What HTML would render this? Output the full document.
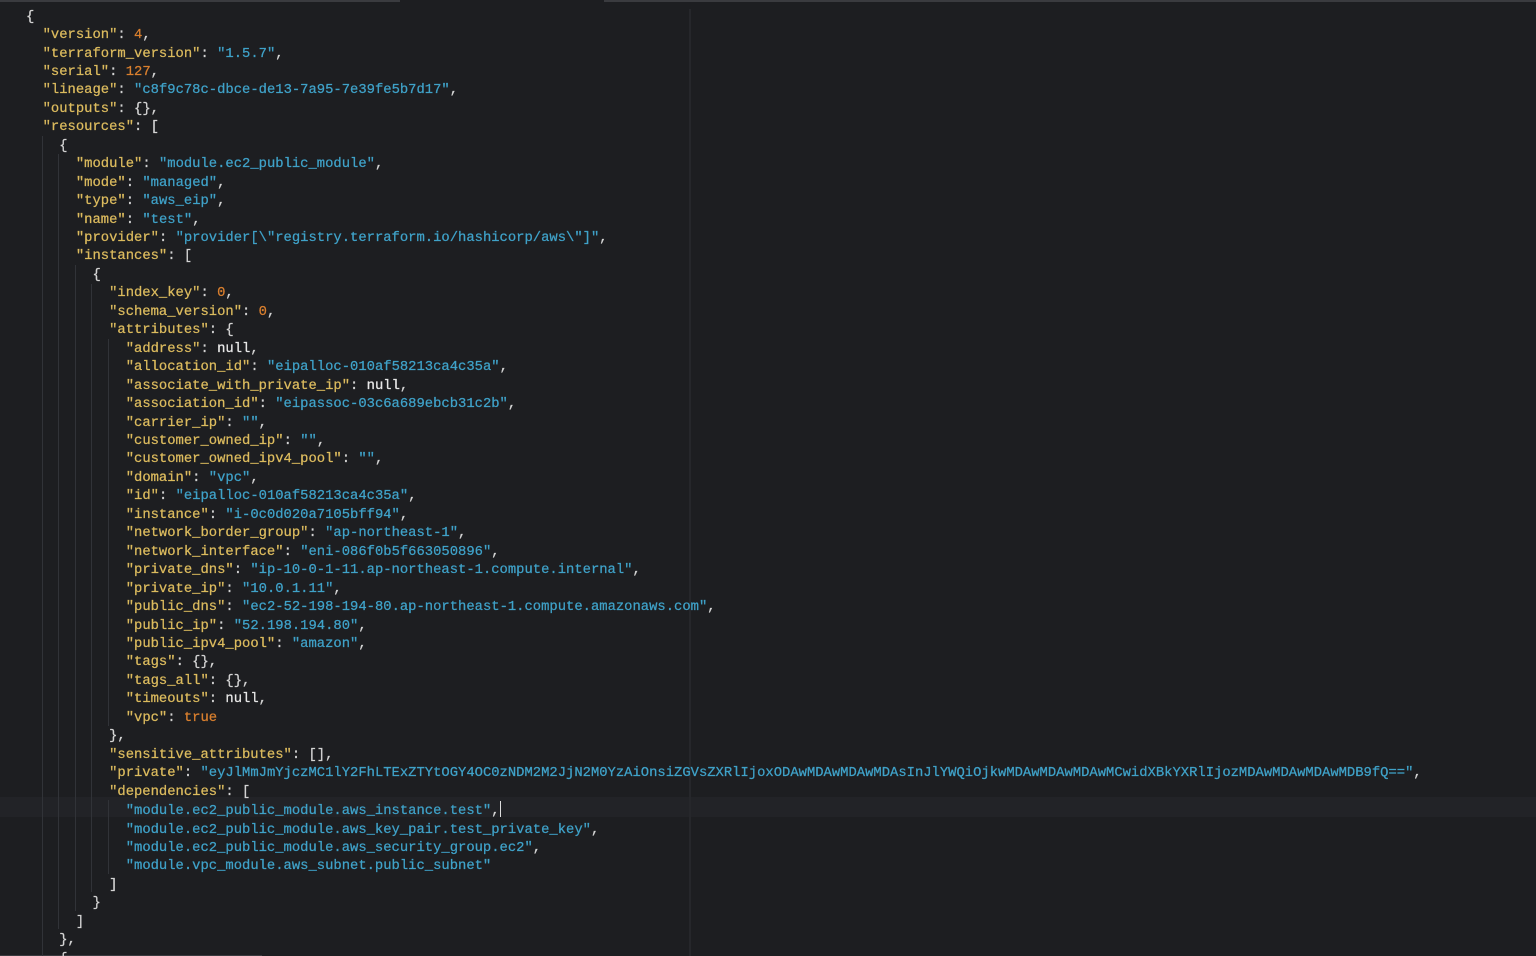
<!DOCTYPE html>
<html><head><meta charset="utf-8"><style>
html,body{margin:0;padding:0;background:#1d1e21;width:1536px;height:956px;overflow:hidden;position:relative}
pre{position:absolute;left:26px;top:7.6px;margin:0;font-family:"Liberation Mono",monospace;font-size:13.85px;line-height:18.45px;color:#d4d4d4;white-space:pre;letter-spacing:0;-webkit-text-stroke:0.25px currentColor}
.k{color:#dcbb5e}.s{color:#3fa2c9}.n{color:#d97f2e}.w{color:#e8e8e8}
.g{position:absolute;width:1px;background:#313338}
.hl{position:absolute;left:0;width:1536px;top:797px;height:20px;background:#222327}
.cur{display:inline-block;width:1.5px;height:16px;background:#ddd;vertical-align:-3px}
</style></head><body>
<div style="position:absolute;left:0;top:0;width:400px;height:2px;background:#3a3b3f"></div>
<div style="position:absolute;left:604px;top:0;width:932px;height:2px;background:#3a3b3f"></div>
<div class="hl"></div>
<div style="position:absolute;left:689px;top:9px;width:2px;height:947px;background:#26272b"></div>
<div style="position:absolute;left:0;top:955px;width:262px;height:1px;background:#3a3b3f"></div>
<div class="g" style="left:42px;top:136px;height:820px"></div>
<div class="g" style="left:58px;top:154.4px;height:774.9px"></div>
<div class="g" style="left:75px;top:265.1px;height:645.8px"></div>
<div class="g" style="left:91px;top:283.6px;height:608.9px"></div>
<div class="g" style="left:108px;top:338.9px;height:387.5px"></div>
<div class="g" style="left:108px;top:800.1px;height:73.8px"></div>
<pre>{
  <span class="k">"version"</span>: <span class="n">4</span>,
  <span class="k">"terraform_version"</span>: <span class="s">"1.5.7"</span>,
  <span class="k">"serial"</span>: <span class="n">127</span>,
  <span class="k">"lineage"</span>: <span class="s">"c8f9c78c-dbce-de13-7a95-7e39fe5b7d17"</span>,
  <span class="k">"outputs"</span>: {},
  <span class="k">"resources"</span>: [
    {
      <span class="k">"module"</span>: <span class="s">"module.ec2_public_module"</span>,
      <span class="k">"mode"</span>: <span class="s">"managed"</span>,
      <span class="k">"type"</span>: <span class="s">"aws_eip"</span>,
      <span class="k">"name"</span>: <span class="s">"test"</span>,
      <span class="k">"provider"</span>: <span class="s">"provider[\"registry.terraform.io/hashicorp/aws\"]"</span>,
      <span class="k">"instances"</span>: [
        {
          <span class="k">"index_key"</span>: <span class="n">0</span>,
          <span class="k">"schema_version"</span>: <span class="n">0</span>,
          <span class="k">"attributes"</span>: {
            <span class="k">"address"</span>: <span class="w">null</span>,
            <span class="k">"allocation_id"</span>: <span class="s">"eipalloc-010af58213ca4c35a"</span>,
            <span class="k">"associate_with_private_ip"</span>: <span class="w">null</span>,
            <span class="k">"association_id"</span>: <span class="s">"eipassoc-03c6a689ebcb31c2b"</span>,
            <span class="k">"carrier_ip"</span>: <span class="s">""</span>,
            <span class="k">"customer_owned_ip"</span>: <span class="s">""</span>,
            <span class="k">"customer_owned_ipv4_pool"</span>: <span class="s">""</span>,
            <span class="k">"domain"</span>: <span class="s">"vpc"</span>,
            <span class="k">"id"</span>: <span class="s">"eipalloc-010af58213ca4c35a"</span>,
            <span class="k">"instance"</span>: <span class="s">"i-0c0d020a7105bff94"</span>,
            <span class="k">"network_border_group"</span>: <span class="s">"ap-northeast-1"</span>,
            <span class="k">"network_interface"</span>: <span class="s">"eni-086f0b5f663050896"</span>,
            <span class="k">"private_dns"</span>: <span class="s">"ip-10-0-1-11.ap-northeast-1.compute.internal"</span>,
            <span class="k">"private_ip"</span>: <span class="s">"10.0.1.11"</span>,
            <span class="k">"public_dns"</span>: <span class="s">"ec2-52-198-194-80.ap-northeast-1.compute.amazonaws.com"</span>,
            <span class="k">"public_ip"</span>: <span class="s">"52.198.194.80"</span>,
            <span class="k">"public_ipv4_pool"</span>: <span class="s">"amazon"</span>,
            <span class="k">"tags"</span>: {},
            <span class="k">"tags_all"</span>: {},
            <span class="k">"timeouts"</span>: <span class="w">null</span>,
            <span class="k">"vpc"</span>: <span class="n">true</span>
          },
          <span class="k">"sensitive_attributes"</span>: [],
          <span class="k">"private"</span>: <span class="s">"eyJlMmJmYjczMC1lY2FhLTExZTYtOGY4OC0zNDM2M2JjN2M0YzAiOnsiZGVsZXRlIjoxODAwMDAwMDAwMDAsInJlYWQiOjkwMDAwMDAwMDAwMCwidXBkYXRlIjozMDAwMDAwMDAwMDB9fQ=="</span>,
          <span class="k">"dependencies"</span>: [
            <span class="s">"module.ec2_public_module.aws_instance.test"</span>,<span class="cur"></span>
            <span class="s">"module.ec2_public_module.aws_key_pair.test_private_key"</span>,
            <span class="s">"module.ec2_public_module.aws_security_group.ec2"</span>,
            <span class="s">"module.vpc_module.aws_subnet.public_subnet"</span>
          ]
        }
      ]
    },
    {
</pre>
</body></html>
